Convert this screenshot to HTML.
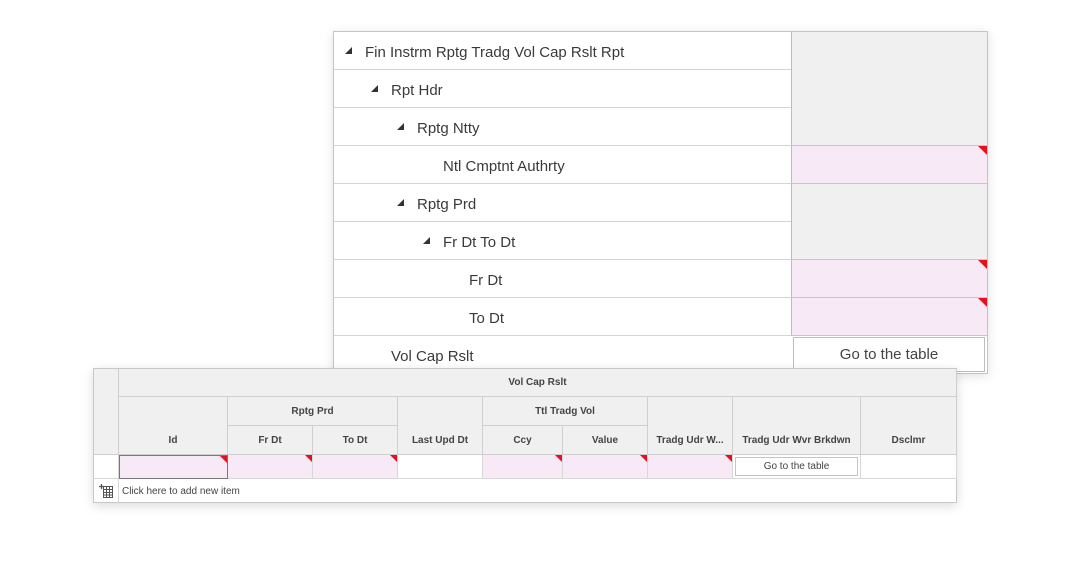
<!DOCTYPE html>
<html><head><meta charset="utf-8"><style>
body{margin:0;width:1080px;height:564px;background:#fff;position:relative;overflow:hidden;font-family:"Liberation Sans",sans-serif;}
.a{position:absolute;box-sizing:border-box;}
.top{left:333px;top:31px;width:655px;height:343px;border:1px solid #c4c4c4;background:#fff;box-shadow:0 2px 10px rgba(0,0,0,.12);}
.row{position:absolute;left:0;width:457px;height:38px;border-bottom:1px solid #d4d4d4;font-size:15px;color:#3a3a3a;line-height:38px;padding-top:2px;box-sizing:border-box;}
.tri{position:absolute;top:15px;width:0;height:0;border-left:7px solid transparent;border-bottom:7px solid #333;}
.gray{position:absolute;left:457px;width:196px;background:#f0f0f0;border-left:1px solid #bdbdbd;box-sizing:border-box;}
.pink{position:absolute;left:457px;width:196px;height:39px;background:#f7eaf6;border-left:1px solid #bdbdbd;border-top:1px solid #c8c8c8;border-bottom:1px solid #c8c8c8;box-sizing:border-box;}
.pink:after,.pc:after{content:"";position:absolute;right:0;top:0;border-left:9px solid transparent;border-top:9px solid #e8101e;}
.pc:after{border-left:7px solid transparent;border-top:7px solid #e8101e;}
.bt{left:93px;top:368px;width:864px;height:135px;border:1px solid #c8c8c8;background:#fff;box-shadow:0 3px 10px rgba(0,0,0,.14);}
.h{position:absolute;background:#f0f0f0;border-right:1px solid #cfcfcf;border-bottom:1px solid #cfcfcf;font-size:10px;font-weight:bold;color:#444;text-align:center;box-sizing:border-box;}
.c{position:absolute;box-sizing:border-box;border-right:1px solid #d8d8d8;border-bottom:1px solid #d8d8d8;}
.pc{background:#f7eaf6;}
</style></head><body>
<div class="a top">
  <div class="gray" style="top:0;height:114px"></div>
  <div class="gray" style="top:152px;height:76px"></div>
  <div class="row" style="top:0"><span class="tri" style="left:11px"></span><span style="position:absolute;left:31px;top:2px">Fin Instrm Rptg Tradg Vol Cap Rslt Rpt</span></div>
  <div class="row" style="top:38px"><span class="tri" style="left:37px"></span><span style="position:absolute;left:57px;top:2px">Rpt Hdr</span></div>
  <div class="row" style="top:76px"><span class="tri" style="left:63px"></span><span style="position:absolute;left:83px;top:2px">Rptg Ntty</span></div>
  <div class="row" style="top:114px"><span style="position:absolute;left:109px;top:2px">Ntl Cmptnt Authrty</span></div>
  <div class="row" style="top:152px"><span class="tri" style="left:63px"></span><span style="position:absolute;left:83px;top:2px">Rptg Prd</span></div>
  <div class="row" style="top:190px"><span class="tri" style="left:89px"></span><span style="position:absolute;left:109px;top:2px">Fr Dt To Dt</span></div>
  <div class="row" style="top:228px"><span style="position:absolute;left:135px;top:2px">Fr Dt</span></div>
  <div class="row" style="top:266px"><span style="position:absolute;left:135px;top:2px">To Dt</span></div>
  <div class="row" style="top:304px;border-bottom:none"><span style="position:absolute;left:57px;top:2px">Vol Cap Rslt</span></div>
  <div class="pink" style="top:113px"></div>
  <div class="pink" style="top:227px"></div>
  <div class="pink" style="top:265px"></div>
  <div class="a" style="left:459px;top:305px;width:192px;height:35px;border:1px solid #bdbdbd;background:#fff;font-size:15px;color:#444;text-align:center;line-height:33px">Go to the table</div>
</div>
<div class="a bt">
  <div class="h" style="left:0;top:0;width:25px;height:86px;background:#f0f0f0"></div>
  <div class="h" style="left:25px;top:0;width:838px;height:28px;line-height:28px">Vol Cap Rslt</div>
  <div class="h" style="left:25px;top:28px;width:109px;height:58px;line-height:28px;padding-top:30px">Id</div>
  <div class="h" style="left:134px;top:28px;width:170px;height:29px;line-height:29px">Rptg Prd</div>
  <div class="h" style="left:134px;top:57px;width:85px;height:29px;line-height:29px">Fr Dt</div>
  <div class="h" style="left:219px;top:57px;width:85px;height:29px;line-height:29px">To Dt</div>
  <div class="h" style="left:304px;top:28px;width:85px;height:58px;line-height:28px;padding-top:30px">Last Upd Dt</div>
  <div class="h" style="left:389px;top:28px;width:165px;height:29px;line-height:29px">Ttl Tradg Vol</div>
  <div class="h" style="left:389px;top:57px;width:80px;height:29px;line-height:29px">Ccy</div>
  <div class="h" style="left:469px;top:57px;width:85px;height:29px;line-height:29px">Value</div>
  <div class="h" style="left:554px;top:28px;width:85px;height:58px;line-height:28px;padding-top:30px">Tradg Udr W...</div>
  <div class="h" style="left:639px;top:28px;width:128px;height:58px;line-height:28px;padding-top:30px">Tradg Udr Wvr Brkdwn</div>
  <div class="h" style="left:767px;top:28px;width:96px;height:58px;line-height:28px;padding-top:30px">Dsclmr</div>
  <div class="c" style="left:0;top:86px;width:25px;height:24px"></div>
  <div class="c pc" style="left:25px;top:86px;width:109px;height:24px;border:1px solid #777"></div>
  <div class="c pc" style="left:134px;top:86px;width:85px;height:24px"></div>
  <div class="c pc" style="left:219px;top:86px;width:85px;height:24px"></div>
  <div class="c" style="left:304px;top:86px;width:85px;height:24px"></div>
  <div class="c pc" style="left:389px;top:86px;width:80px;height:24px"></div>
  <div class="c pc" style="left:469px;top:86px;width:85px;height:24px"></div>
  <div class="c pc" style="left:554px;top:86px;width:85px;height:24px"></div>
  <div class="c" style="left:639px;top:86px;width:128px;height:24px"><div class="a" style="left:2px;top:2px;width:123px;height:19px;border:1px solid #c4c4c4;font-size:10px;color:#444;text-align:center;line-height:18px">Go to the table</div></div>
  <div class="c" style="left:767px;top:86px;width:96px;height:24px"></div>
  <div class="c" style="left:0;top:110px;width:25px;height:24px;border-bottom:none">
    <svg width="14" height="14" viewBox="0 0 14 14" style="position:absolute;left:5px;top:5px"><g fill="none" stroke="#555" stroke-width="1"><path d="M4.5 2.5h9v11h-9zM4.5 5.5h9M4.5 8.5h9M4.5 11h9M7.5 2.5v11M10.5 2.5v11"/><path d="M0 2.5h5M2.5 0v5" stroke-width="1.3"/></g></svg>
  </div>
  <div class="a" style="left:28px;top:111px;height:24px;line-height:24px;font-size:10px;color:#444">Click here to add new item</div>
</div>
</body></html>
